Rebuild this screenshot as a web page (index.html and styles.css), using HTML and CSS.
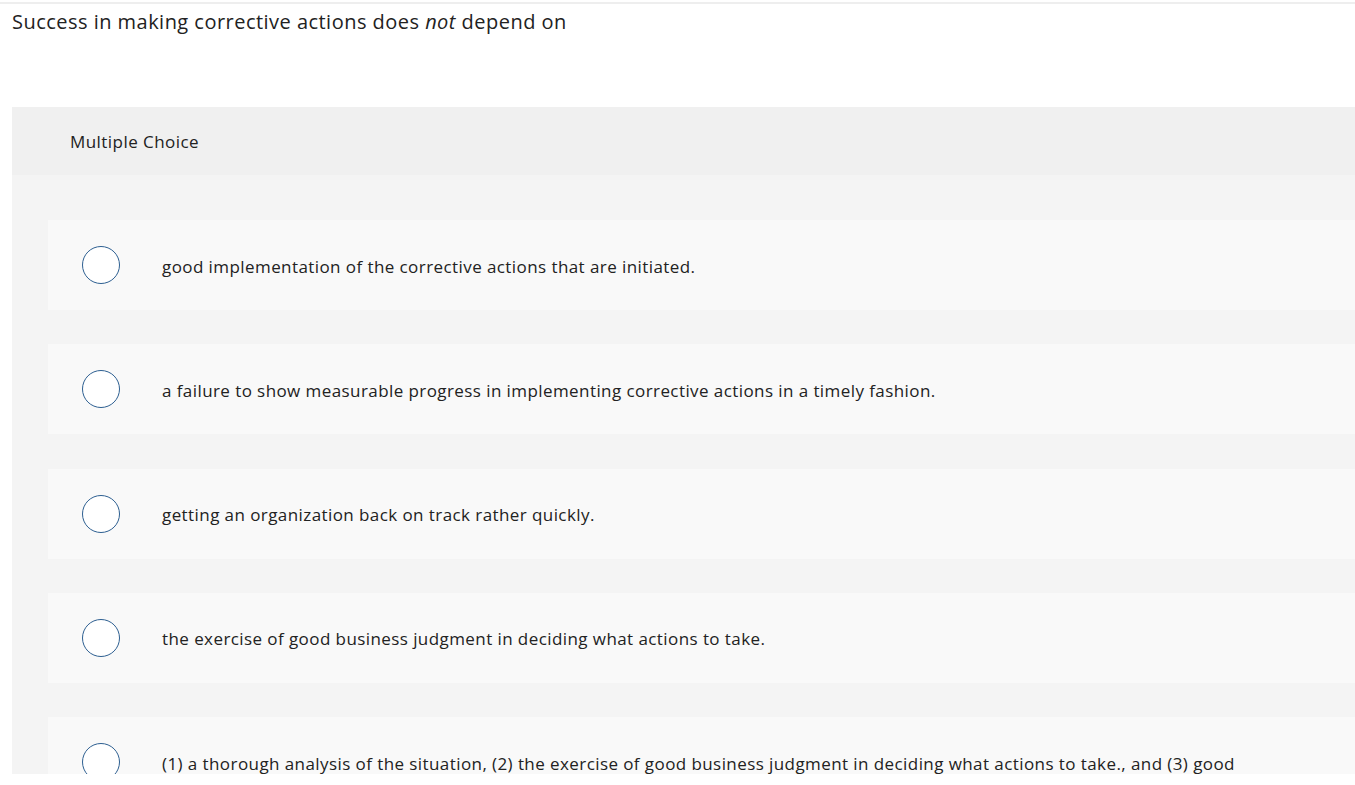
FILE: index.html
```html
<!DOCTYPE html>
<html>
<head>
<meta charset="utf-8">
<link rel="stylesheet" href="styles.css">
</head>
<body>
<div class="page">
  <div class="rule"></div>
  <p class="question">Success in making corrective actions does <em>not</em> depend on</p>
  <div class="panel">
    <div class="panel-head">Multiple Choice</div>
    <div class="panel-body">
      <div class="option"><span class="radio"></span><span class="label">good implementation of the corrective actions that are initiated.</span></div>
      <div class="option"><span class="radio"></span><span class="label">a failure to show measurable progress in implementing corrective actions in a timely fashion.</span></div>
      <div class="option"><span class="radio"></span><span class="label">getting an organization back on track rather quickly.</span></div>
      <div class="option"><span class="radio"></span><span class="label">the exercise of good business judgment in deciding what actions to take.</span></div>
      <div class="option"><span class="radio"></span><span class="label">(1) a thorough analysis of the situation, (2) the exercise of good business judgment in deciding what actions to take., and (3) good</span></div>
    </div>
  </div>
</div>
</body>
</html>
```
FILE: styles.css
```css
html, body {
  margin: 0;
  padding: 0;
  background: #fff;
}
body {
  font-family: "Open Sans", "Liberation Sans", sans-serif;
  color: #222;
}
.page {
  height: 774px;
  overflow: hidden;
  padding-top: 2px;
  box-sizing: border-box;
}
.rule {
  height: 2px;
  background: #eeeeee;
}
.question {
  margin: 0;
  padding-left: 12px;
  padding-top: 5px;
  height: 103px;
  box-sizing: border-box;
  font-size: 20px;
  line-height: 26px;
  letter-spacing: 0.47px;
  color: #222;
}
.question em {
  font-style: italic;
}
.panel {
  margin-left: 12px;
  background: #f4f4f4;
}
.panel-head {
  height: 68px;
  background: #f0f0f0;
  padding-left: 58px;
  display: flex;
  align-items: center;
  font-size: 17px;
  letter-spacing: 0.45px;
  color: #222;
}
.panel-body {
  padding: 45px 0 0 36px;
  display: flex;
  flex-direction: column;
  gap: 34.33px;
}
.option {
  height: 90px;
  background: #f9f9f9;
  display: flex;
  align-items: center;
  padding-left: 34px;
  flex-shrink: 0;
}
.radio {
  width: 38px;
  height: 38px;
  box-sizing: border-box;
  border: 1.5px solid #2d5f91;
  border-radius: 50%;
  background: #fff;
  flex-shrink: 0;
}
.label {
  margin-left: 42px;
  padding-top: 2px;
  font-size: 17px;
  letter-spacing: 0.42px;
  color: #222;
}
```
